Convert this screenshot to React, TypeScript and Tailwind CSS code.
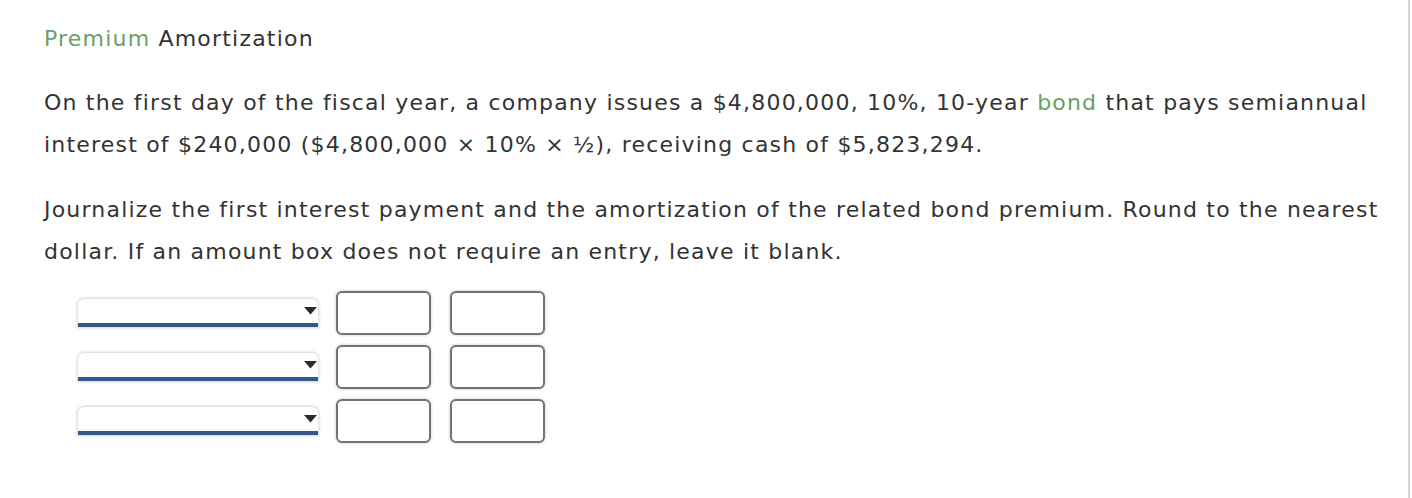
const ROWS = [0, 1, 2];

function SelectBox() {
  return (
    <div className="relative h-[28px] w-[240px] rounded-t-[6px] border-b-4 border-[#31598a] bg-white shadow-[0_0_3px_1px_rgba(0,0,0,0.18)]">
      <svg
        className="absolute right-[1px] top-[8px]"
        width="13"
        height="8"
        viewBox="0 0 13 8"
      >
        <path d="M0 0 L13 0 L6.5 7.5 Z" fill="#2b2b2b" />
      </svg>
    </div>
  );
}

function AmountBox() {
  return (
    <div className="h-[44px] w-[95px] rounded-[6px] border-2 border-[#737373] bg-white shadow-[0_0_3px_rgba(0,0,0,0.25)]" />
  );
}

export default function App() {
  return (
    <div
      className="h-[498px] w-[1412px] bg-white"
      style={{ fontFamily: '"DejaVu Sans", Verdana, sans-serif' }}
    >
      <div className="h-full w-[1410px] border-r-2 border-[#d4d4d4] pl-[44px] pt-[18px] text-[22px] leading-[42px] tracking-[1.2px] text-[#333333]">
        <h1 className="text-[22px] font-normal">
          <span className="text-[#6aa062]">Premium</span> Amortization
        </h1>

        <p className="mt-[22px] whitespace-nowrap">
          On the first day of the fiscal year, a company issues a $4,800,000,
          10%, 10-year <span className="text-[#6aa062]">bond</span> that pays
          semiannual
          <br />
          interest of $240,000 ($4,800,000 × 10% × ½), receiving cash of
          $5,823,294.
        </p>

        <p className="mt-[23px] whitespace-nowrap">
          Journalize the first interest payment and the amortization of the
          related bond premium. Round to the nearest
          <br />
          dollar. If an amount box does not require an entry, leave it blank.
        </p>

        <div className="mt-[18px] flex flex-col gap-[10px] pl-[34px]">
          {ROWS.map((r) => (
            <div key={r} className="flex items-center">
              <SelectBox />
              <div className="ml-[18px] flex gap-[19px]">
                <AmountBox />
                <AmountBox />
              </div>
            </div>
          ))}
        </div>
      </div>
    </div>
  );
}
